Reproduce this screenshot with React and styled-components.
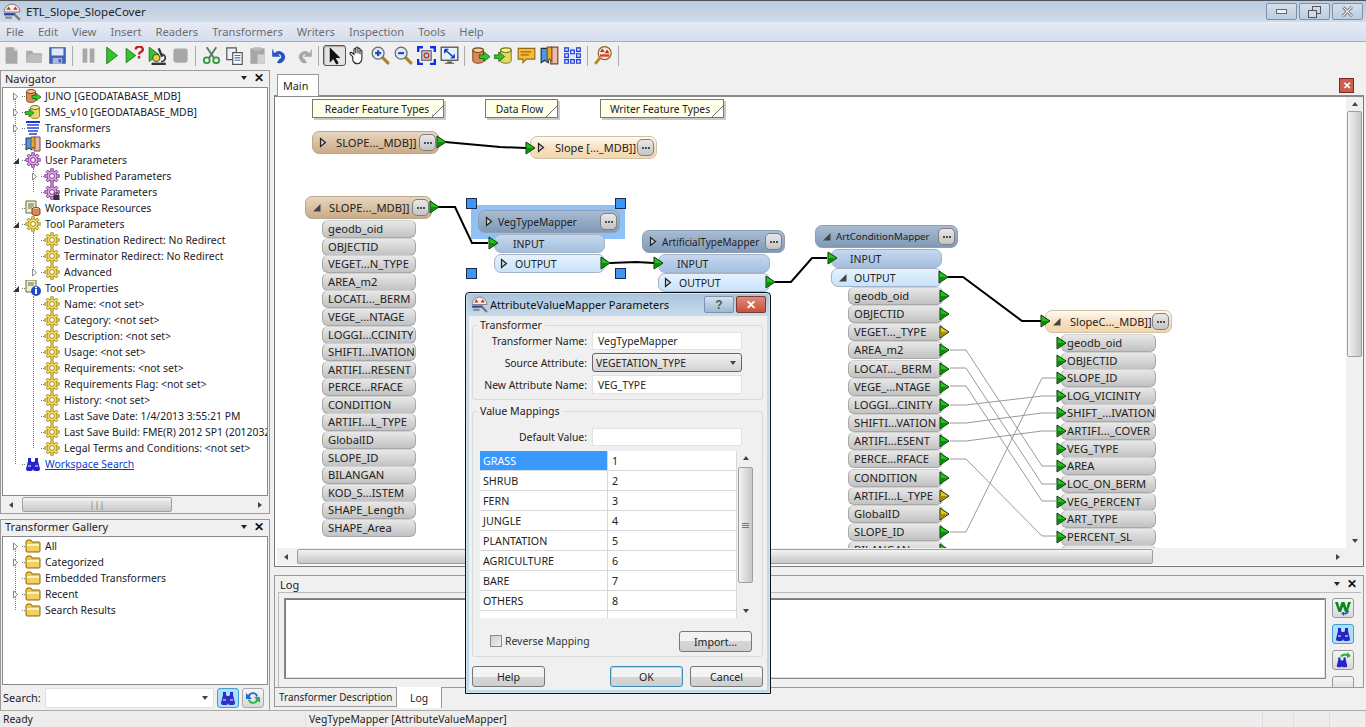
import React from "react";
import styled, { createGlobalStyle, css } from "styled-components";

const FONT = `"Noto Sans", "Liberation Sans", Arial, sans-serif`;
const Global = createGlobalStyle`
  html, body { margin: 0; padding: 0; width: 1366px; height: 727px; overflow: hidden; background: #f0f0f0; }
  body { font-family: ${FONT}; font-size: 10.4px; color: #101020; }
  * { box-sizing: border-box; }
`;

const Page = styled.div`display:flex;flex-direction:column;width:1366px;height:727px;background:#f0f0f0;position:relative;overflow:hidden;`;
const TitleBar = styled.div`
  height:22px;flex:none;display:flex;align-items:center;padding:0 3px 0 3px;gap:5px;
  border-top:1px solid #50545a;
  background:linear-gradient(#b9cbdf,#cfdbe9);font-size:11.5px;color:#222;
`;
const TitleText = styled.span`flex:1;`;
const WinBtns = styled.div`display:flex;gap:2px;margin-top:0;`;
const WinBtn = styled.div`
  width:31px;height:17px;border:1px solid #7f8fa7;border-radius:2px;display:flex;align-items:center;justify-content:center;
  background:linear-gradient(#d3dfec,#bccde0);
`;
const MenuBar = styled.div`
  height:20px;flex:none;display:flex;align-items:center;padding:0 0 0 6px;gap:14px;
  background:linear-gradient(#e6eaf4,#d5deee);font-size:11.2px;color:#6d6d6d;border-bottom:1px solid #a8aeb8;
`;
const ToolBar = styled.div`height:27px;flex:none;display:flex;align-items:center;background:#f0f0f0;`;
const Tool = styled.div`
  width:23px;height:21px;flex:none;display:flex;align-items:center;justify-content:center;
  svg{width:19px;height:19px;}
  ${p=>p.$on&&css`border:1px solid #555;border-radius:3px;background:#e4e4e4;box-shadow:inset 1px 1px 1px #aaa;`}
`;
const ToolSep = styled.div`width:1px;height:20px;background:#aaa;margin:0 4px 0 3px;flex:none;`;
const Body = styled.div`flex:1;display:flex;min-height:0;padding:1px 2px 0 0;`;
const LeftCol = styled.div`width:270px;flex:none;display:flex;flex-direction:column;gap:5px;`;
const RightCol = styled.div`flex:1;min-width:0;display:flex;flex-direction:column;padding:3px 0 0 4px;`;
const Dock = styled.div`
  flex:${p=>p.$flex||"none"};height:${p=>p.$h||"auto"};display:flex;flex-direction:column;min-height:0;
  border:1px solid #9a9a9a;border-bottom-width:${p=>p.$nob?0:1}px;padding:0 1px 0 1px;background:#f0f0f0;
`;
const DockHead = styled.div`
  height:16px;flex:none;display:flex;align-items:center;padding:0 4px ${p=>p.$pb||0}px 3px;font-size:11px;color:#222;
`;
const DockTitle = styled.span`flex:1;`;
const DockMenu = styled.span`width:0;height:0;border:3px solid transparent;border-top:4px solid #222;border-bottom:0;margin-right:7px;`;
const DockClose = styled.span`font:bold 12px "Liberation Sans",sans-serif;color:#111;line-height:12px;`;
const TreeBox = styled.div`
  flex:1;min-height:0;background:#fff;border:1px solid #8a8a8a;overflow:hidden;position:relative;padding-top:${p=>p.$pt||0}px;
`;
const TreeRow = styled.div`
  height:16px;display:flex;align-items:center;white-space:nowrap;padding-left:${p=>p.$lvl?27:8}px;position:relative;
`;
const Expander = styled.span`
  width:9px;height:9px;flex:none;margin-right:2px;display:flex;align-items:center;justify-content:center;
`;
const Dots = styled.span`width:3px;border-top:1px dotted #777;flex:none;`;
const TreeIcon = styled.span`width:16px;height:16px;flex:none;display:flex;align-items:center;justify-content:center;margin-right:4px;`;
const TreeLabel = styled.span`color:#1a1a2a;`;
const LinkLabel = styled.span`color:#0a3ccc;text-decoration:underline;`;
const VDots = styled.div`
  position:absolute;left:${p=>p.$x}px;top:${p=>p.$top}px;height:${p=>p.$h}px;border-left:1px dotted #777;
`;

/* scrollbars */
const HBar = styled.div`
  height:${p=>p.$h||17}px;flex:none;background:#f0f0f0;display:flex;align-items:center;position:relative;
`;
const Arrow = styled.span`
  width:17px;flex:none;display:flex;align-items:center;justify-content:center;
`;
const Thumb = styled.div`
  height:15px;border:1px solid #9f9f9f;border-radius:2px;background:linear-gradient(#f4f4f4 0%,#dcdcdc 50%,#c8c8c8 100%);
  flex:none;width:${p=>p.$w}px;margin-left:${p=>p.$ml||0}px;position:relative;display:flex;align-items:center;justify-content:center;
  color:#777;font-size:9px;line-height:9px;letter-spacing:0;
`;
const VThumb = styled.div`
  width:15px;margin:${p=>p.$mt||0}px 1px 0;height:${p=>p.$h}px;border:1px solid #9f9f9f;border-radius:2px;flex:none;
  background:linear-gradient(90deg,#f4f4f4 0%,#dcdcdc 50%,#c8c8c8 100%);display:flex;align-items:center;justify-content:center;
`;
const Grip = styled.div`width:7px;height:5px;border-top:1px solid #777;border-bottom:1px solid #777;position:relative;
  &::after{content:"";position:absolute;left:0;right:0;top:1px;border-top:1px solid #777;}`;
const VBar = styled.div`width:17px;flex:none;display:flex;flex-direction:column;background:#f0f0f0;`;
const VArrow = styled.div`height:14px;flex:none;display:flex;align-items:center;justify-content:center;`;
const VFill = styled.div`flex:1;`;
const Tri = styled.span`
  width:0;height:0;border:3px solid transparent;
  ${p=>p.$d==="l"&&css`border-right:4px solid #444;border-left:0;`}
  ${p=>p.$d==="r"&&css`border-left:4px solid #444;border-right:0;`}
  ${p=>p.$d==="u"&&css`border-bottom:4px solid #444;border-top:0;`}
  ${p=>p.$d==="d"&&css`border-top:4px solid #444;border-bottom:0;`}
`;

const SearchRow = styled.div`height:25px;flex:none;display:flex;align-items:center;gap:3px;padding:0 2px 0 1px;`;
const SearchLabel = styled.span`width:39px;font-size:11px;color:#222;`;
const SearchBox = styled.div`
  width:169px;height:20px;background:#fff;border:1px solid #e0e0e0;border-radius:2px;display:flex;align-items:center;justify-content:flex-end;padding-right:5px;
`;
const SmallBtn = styled.div`
  width:22px;height:20px;flex:none;border:1px solid ${p=>p.$on?"#3da0d8":"#aaa"};border-radius:3px;
  background:${p=>p.$on?"#aee0f8":"linear-gradient(#f5f5f5,#d8d8d8)"};display:flex;align-items:center;justify-content:center;
`;

/* main */
const MainTabs = styled.div`height:22px;flex:none;display:flex;align-items:flex-end;margin-left:0;`;
const MainTab = styled.div`
  height:22px;width:42px;margin-left:3px;border:1px solid #999;border-bottom:0;background:#fff;display:flex;align-items:center;padding-left:5px;font-size:10.8px;color:#222;margin-bottom:-1px;z-index:1;position:relative;
`;
const MainFrame = styled.div`
  height:472px;flex:none;border:1px solid #777;border-top:2px solid #8a8a8a;background:#fff;display:flex;flex-direction:column;position:relative;padding:0 0 1px 2px;
`;
const CloseTab = styled.div`
  position:absolute;right:9px;top:-19px;width:15px;height:15px;background:#c9604e;border:1px solid #7a2a20;display:flex;align-items:center;justify-content:center;
  color:#fff;font:bold 10px "Liberation Sans",sans-serif;
`;
const MainRow = styled.div`flex:1;min-height:0;display:flex;`;
const Canvas = styled.div`flex:1;min-width:0;position:relative;overflow:hidden;background:#fff;`;
const Wires = styled.svg`position:absolute;left:0;top:0;`;

const Note = styled.div`
  position:absolute;left:${p=>p.$x}px;top:${p=>p.$y}px;width:${p=>p.$w}px;height:19px;
  background:#ffffea;border:1px solid #777;box-shadow:2px 2px 0 #c9c9c9;font-size:10.3px;color:#222;text-align:center;line-height:18px;padding-right:${p=>p.$pr||4}px;
`;
const Fold = styled.svg`position:absolute;right:0;bottom:0;`;

const nodeBg = {
  reader:"linear-gradient(#e8d6bf,#cbab86)",
  writer:"linear-gradient(#fffaf2,#f6dfbe 55%,#f3d8b0)",
  xform:"linear-gradient(#a8bcd3,#7f99b7)",
};
const nodeBd = {reader:"#b9a68f",writer:"#cfc0a6",xform:"#8ea0b6"};
const Node = styled.div`
  position:absolute;left:${p=>p.$x}px;top:${p=>p.$y}px;width:${p=>p.$w}px;height:23px;border-radius:7px;
  background:${p=>nodeBg[p.$k]};border:1px solid ${p=>nodeBd[p.$k]};display:flex;align-items:center;padding-left:6px;font-size:11px;color:#222;
`;
const NodeName = styled.span`flex:1;white-space:nowrap;margin-left:${p=>p.$ml||6}px;font-size:${p=>p.$fs||11}px;`;
const Dots3 = styled.div`
  width:17px;height:17px;border:1px solid #808080;border-radius:5px;background:linear-gradient(#e8e8e8,#c4c4c4);margin-right:2px;flex:none;
  display:flex;align-items:center;justify-content:center;gap:1px;
  i{width:2px;height:2px;background:#222;display:block;border-radius:1px;}
`;
const portBg = {
  input:"linear-gradient(#c5d8ef,#a5bfdd)",
  output:"linear-gradient(#e5f2fe,#c9e2fa)",
};
const Port = styled.div`
  position:absolute;left:${p=>p.$x}px;top:${p=>p.$y}px;width:${p=>p.$w}px;height:${p=>p.$h||19}px;border-radius:7px;
  background:${p=>portBg[p.$k]};border:1px solid #a3b4c8;display:flex;align-items:center;font-size:10.5px;color:#222;padding-left:${p=>p.$pl||18}px;gap:7px;
`;
const Attr = styled.div`
  position:absolute;left:${p=>p.$x}px;top:${p=>p.$y}px;width:${p=>p.$w}px;height:18px;border-radius:6px;
  background:linear-gradient(#e8e8e8,#c2c2c2);border:1px solid #a8a8a8;border-top-color:#d0d0d0;
  font-size:11.2px;color:#222;line-height:15px;padding-left:${p=>p.$pl||5}px;white-space:nowrap;overflow:hidden;
`;
const Arrowhead = styled.svg`position:absolute;left:${p=>p.$x}px;top:${p=>p.$y}px;`;
const Halo = styled.div`position:absolute;left:${p=>p.$x}px;top:${p=>p.$y}px;width:${p=>p.$w}px;height:${p=>p.$h}px;background:#8fc1f7;`;
const Handle = styled.div`position:absolute;left:${p=>p.$x}px;top:${p=>p.$y}px;width:11px;height:11px;background:#3b97f5;border:1px solid #1c2a48;`;

/* log */
const LogPanel = styled.div`
  margin-top:8px;height:112px;flex:none;border:1px solid #9a9a9a;border-bottom:0;padding:0 2px;display:flex;flex-direction:column;
`;
const LogBody = styled.div`flex:1;min-height:0;display:flex;border-top:1px solid #bbb;margin:0 0 0 1px;padding:5px 0 0 5px;gap:6px;overflow:hidden;border-left:1px solid #bbb;`;
const LogBox = styled.div`flex:1;height:81px;background:#fff;border:2px solid #7a7a7a;border-right-color:#ddd;border-bottom-color:#ddd;outline:1px solid #888;outline-offset:-1px;`;
const LogBtns = styled.div`width:22px;display:flex;flex-direction:column;gap:6px;flex:none;margin-right:7px;`;
const LogBtn = styled.div`
  width:22px;height:20px;flex:none;border:1px solid ${p=>p.$on?"#3da0d8":"#999"};border-radius:3px;
  background:${p=>p.$on?"#aee0f8":"linear-gradient(#f5f5f5,#d8d8d8)"};display:flex;align-items:center;justify-content:center;
`;
const BottomTabs = styled.div`height:22px;flex:none;display:flex;align-items:flex-start;border-top:1px solid #9a9a9a;`;
const BTab = styled.div`
  height:${p=>p.$on?21:19}px;padding:0 0 0 4px;display:flex;align-items:center;font-size:${p=>p.$on?10.4:9.9}px;color:#222;white-space:nowrap;
  width:${p=>p.$w}px;
  ${p=>p.$on?css`background:#fff;border-right:1px solid #999;margin-top:-1px;justify-content:center;padding:0;`:css`background:#eee;border:1px solid #999;border-top:0;`}
`;
const Status = styled.div`height:17px;flex:none;display:flex;align-items:center;border-top:1px solid #aaa;background:#efecec;font-size:10.4px;color:#222;margin-top:auto;`;
const StatusCell = styled.div`
  height:100%;display:flex;align-items:center;padding:0 3px;width:${p=>p.$w}px;border-right:1px solid #ddd;flex:${p=>p.$f||"none"};
`;

/* dialog */
const Dialog = styled.div`
  position:absolute;left:465px;top:292px;width:306px;height:402px;border:1px solid #111;border-radius:4px 4px 0 0;
  background:linear-gradient(#a8c4dc,#c8dcec 6%,#bcd7ea);padding:0 3px 3px;display:flex;flex-direction:column;
  box-shadow:0 0 0 1px #cfe3f1 inset;z-index:5;
`;
const DlgTitle = styled.div`height:23px;flex:none;display:flex;align-items:center;padding:0 1px 0 2px;gap:2px;font-size:11.1px;color:#111;`;
const DlgTitleText = styled.span`flex:1;`;
const DlgCaption = styled.div`
  width:${p=>p.$w}px;height:17px;border:1px solid ${p=>p.$red?"#7c3b32":"#7d93ab"};border-radius:2px;display:flex;align-items:center;justify-content:center;
  background:${p=>p.$red?"linear-gradient(#e28a78,#c9503e)":"linear-gradient(#d3e2ef,#9db9d2)"};
  color:${p=>p.$red?"#fff":"#555"};font:bold 12px "Liberation Sans",sans-serif;
`;
const DlgBody = styled.div`flex:1;background:#f0f0f0;display:flex;flex-direction:column;padding:9px 4px 6px 3px;min-height:0;`;
const Group = styled.div`
  border:1px solid #d9d9d9;border-radius:3px;position:relative;margin-bottom:${p=>p.$mb||0}px;height:${p=>p.$h}px;flex:none;padding:${p=>p.$pad||"6px 0 0"};background:#f0f0f0;
`;
const Legend = styled.span`position:absolute;left:4px;top:-7px;background:#f0f0f0;padding:0 3px;font-size:10.6px;color:#222;line-height:13px;`;
const FormRow = styled.div`display:flex;align-items:center;justify-content:flex-end;height:${p=>p.$h||18}px;margin-bottom:3px;padding-right:20px;gap:5px;font-size:10.4px;color:#222;`;
const Input = styled.div`width:150px;height:100%;background:#fff;border:1px solid #e2e2e2;padding-left:5px;display:flex;align-items:center;`;
const Select = styled.div`
  width:150px;height:100%;border:1px solid #666;border-radius:3px;background:linear-gradient(#f2f2f2,#d2d2d2);padding:0 5px 0 3px;display:flex;align-items:center;justify-content:space-between;
`;
const TableWrap = styled.div`display:flex;margin:5px 8px 0 7px;height:167px;`;
const Table = styled.div`flex:1;background:#fff;overflow:hidden;`;
const TRow = styled.div`display:flex;height:20px;border-bottom:1px solid #d8d8d8;font-size:10.7px;color:#222;`;
const TCell = styled.div`
  width:${p=>p.$w||128}px;flex:${p=>p.$f||"none"};display:flex;align-items:center;padding-left:${p=>p.$pl||3}px;border-right:1px solid #d8d8d8;
  ${p=>p.$sel&&css`background:#3a99ff;color:#fff;`}
`;
const DlgFoot = styled.div`display:flex;align-items:center;padding:13px 10px 0 17px;justify-content:space-between;`;
const CheckLabel = styled.label`display:flex;align-items:center;gap:3px;font-size:10.4px;color:#333;margin-top:-2px;`;
const CheckBox = styled.span`width:12px;height:12px;border:1px solid #8a8a8a;background:linear-gradient(135deg,#ccc,#f2f2f2);display:block;`;
const Btn = styled.div`
  width:73px;height:21px;border:1px solid ${p=>p.$def?"#3f8cb4":"#777"};border-radius:3px;display:flex;align-items:center;justify-content:center;font-size:10.6px;color:#222;
  background:linear-gradient(#f3f3f3 50%,#d6d6d6 50%,#cfcfcf);
  ${p=>p.$def&&css`box-shadow:inset 0 0 0 1px #a6dcf3;`}
`;
const BtnRow = styled.div`display:flex;padding:9px 0 0;gap:7px;`;
const Spacer = styled.div`flex:1;`;

/* ---------- icons ---------- */
const S = ({s=16,children,...r})=><svg width={s} height={s} viewBox="0 0 16 16" {...r}>{children}</svg>;

const IcNew = ()=><S><path d="M3 1h7l3 3v11H3z" fill="#a8a8a8"/><path d="M10 1l3 3h-3z" fill="#d8d8d8"/></S>;
const IcOpen = ()=><S><path d="M1 4h5l1 2h7v8H1z" fill="#a9a9a9"/><path d="M3 7h12l-2 7H1z" fill="#bdbdbd"/></S>;
const IcSave = ()=><S><path d="M1 1h14v14H1z" fill="#3f63b8"/><path d="M3 2h10v6H3z" fill="#dfe7f8"/><path d="M4 10h8v5H4z" fill="#a9b9de"/><path d="M9 11h2v3H9z" fill="#3f63b8"/></S>;
const IcPause = ()=><S><path d="M3 2h4v12H3zM9 2h4v12H9z" fill="#a8a8a8"/></S>;
const IcPlay = ()=><S><path d="M4 1l9 7-9 7z" fill="#35c42c" stroke="#1d7a18" strokeWidth=".8"/></S>;
const IcPlayQ = ()=><S><path d="M1 2l8 6-8 6z" fill="#35c42c" stroke="#1d7a18" strokeWidth=".8"/><path d="M9 3a3 2.4 0 1 1 4 2.2c-1 .6-1.2 1-1.2 2" fill="none" stroke="#d01818" strokeWidth="2"/><path d="M10.8 8.5h2v2h-2z" fill="#d01818"/></S>;
const IcInspect = ()=><S><path d="M1 1l8 6-8 6z" fill="#35c42c" stroke="#1d7a18" strokeWidth=".8"/><path d="M9 2l3 7" stroke="#333" strokeWidth="2"/><path d="M3 14h12v2H3z" fill="#333"/><circle cx="7" cy="10" r="3" fill="#e8d23a" stroke="#555"/><path d="M11 13a3 3 0 0 0 1-6" fill="none" stroke="#333" strokeWidth="1.4"/></S>;
const IcStop = ()=><S><rect x="2" y="2" width="12" height="12" rx="2" fill="#a8a8a8"/></S>;
const IcCut = ()=><S><path d="M4 1l6 9M12 1l-6 9" stroke="#5a7a6a" strokeWidth="1.6"/><circle cx="4" cy="12" r="2.5" fill="none" stroke="#2d9a3a" strokeWidth="1.5"/><circle cx="12" cy="12" r="2.5" fill="none" stroke="#2d9a3a" strokeWidth="1.5"/></S>;
const IcCopy = ()=><S><path d="M1.500 1.500h8v10h-8z" fill="#eef" stroke="#555"/><path d="M6.500 5.500h8v10h-8z" fill="#fff" stroke="#555"/><path d="M8 8h5M8 10h5M8 12h5" stroke="#4a6ab0"/></S>;
const IcPaste = ()=><S><path d="M2 2h12v13H2z" fill="#a6a6a6"/><path d="M5 1h6v3H5z" fill="#bcbcbc"/><path d="M8 7h6v8H8z" fill="#d2d2d2"/></S>;
const IcUndo = ()=><S><path d="M3 6a5 5 0 1 1 2 8l2-3a2 2 0 1 0-1-4L8 9H1V2z" fill="#2754c2"/></S>;
const IcRedo = ()=><S><path d="M13 6a5 5 0 1 0-2 8l-2-3a2 2 0 1 1 1-4L8 9h7V2z" fill="#a8a8a8"/></S>;
const IcArrow = ()=><S><path d="M4 1v13l3-3 2.500 4.500 2-1L9 10h4z" fill="#111"/></S>;
const IcHand = ()=><S><path d="M4 9L2 7c-1-1 0-2 1-1.500L5 7V3c0-1.200 1.600-1.200 1.600 0v3V1.800c0-1.200 1.800-1.200 1.800 0V6V2.600c0-1.200 1.700-1.200 1.700 0V7V4.200c0-1.200 1.600-1.200 1.600 0V10c0 3-1.500 5-4 5-2 0-3-1.500-3.700-3z" fill="#fff" stroke="#222" strokeWidth=".9"/></S>;
const IcZoom = ({minus})=><S><path d="M9 9l6 6" stroke="#a8842a" strokeWidth="2.600"/><circle cx="6" cy="6" r="5" fill="#dfe9f8" stroke="#666"/><path d={minus?"M3.500 6h5":"M3.500 6h5M6 3.500v5"} stroke="#2448b0" strokeWidth="1.800"/></S>;
const IcFit = ()=><S><path d="M1 5V1h4M11 1h4v4M15 11v4h-4M5 15H1v-4" fill="none" stroke="#1030e0" strokeWidth="2"/><rect x="4" y="4" width="8" height="8" fill="#c8c8d8" stroke="#667"/><circle cx="8" cy="8" r="2" fill="none" stroke="#c03030"/></S>;
const IcDisplay = ()=><S><rect x="1" y="1" width="14" height="11" fill="#e8f0fa" stroke="#444"/><path d="M4 3h3M4 3v3M12 10H9M12 10V7M4 3l8 7" stroke="#1040d0" strokeWidth="1.200" fill="none"/><path d="M6 13h4v1h2v1H4v-1h2z" fill="#555"/></S>;
const IcDbOut = ({s=16})=><S s={s}><ellipse cx="6" cy="3.500" rx="4.500" ry="2" fill="#f4c8a0" stroke="#7a4418"/><path d="M1.500 3.500v9c0 1.100 2 2 4.500 2s4.500-.9 4.500-2v-9c0 1.100-2 2-4.500 2s-4.500-.9-4.500-2z" fill="#d88a58" stroke="#7a4418" strokeWidth=".8"/><path d="M7 7.500h4V5l5 4-5 4v-2.500H7z" fill="#34c428" stroke="#176a12" strokeWidth=".7"/></S>;
const IcDbIn = ({s=16})=><S s={s}><ellipse cx="10" cy="3.500" rx="4.500" ry="2" fill="#f5f0a0" stroke="#7a7418"/><path d="M5.500 3.500v9c0 1.100 2 2 4.500 2s4.500-.9 4.500-2v-9c0 1.100-2 2-4.500 2s-4.500-.9-4.500-2z" fill="#e4d860" stroke="#7a7418" strokeWidth=".8"/><path d="M0 7.500h4V5l5 4-5 4v-2.500H0z" fill="#34c428" stroke="#176a12" strokeWidth=".7"/></S>;
const IcStack = ()=><S><path d="M1 1h14v2H1z" fill="#2a30c8"/><path d="M2 4h12v2H2zM2 7h12v2H2zM3 10h10v2H3zM4 13h8v2H4z" fill="#5870e8"/></S>;
const IcBook = ({s=16})=><S s={s}><path d="M1 2h6v12l-3-2-3 2z" fill="#4a9ae8" stroke="#234"/><path d="M9 1h6v14H9z" fill="#f0b8a8" stroke="#744"/><path d="M6 1h4v12l-2-2-2 2z" fill="#e6a820" stroke="#754"/></S>;
const Gear = ({c="#f4e070",d="#a08a18",lock})=><S>
  <g fill={c} stroke={d} strokeWidth=".9">
    <circle cx="8" cy="8" r="5.200"/>
    {[0,45,90,135,180,225,270,315].map(a=><rect key={a} x="6.800" y="0.800" width="2.400" height="3" transform={`rotate(${a} 8 8)`}/>)}
  </g>
  <circle cx="8" cy="8" r="4.400" fill={c}/>
  <circle cx="8" cy="8" r="2.400" fill="#fff" stroke={d}/>
  {lock&&<><path d="M9.500 11h6v5h-6z" fill="#333"/><path d="M10.800 11V9.500a2 2 0 0 1 3.500 0V11" fill="none" stroke="#333"/></>}
</S>;
const Purple = p=><Gear c="#e0b8e8" d="#7a2a90" {...p}/>;
const IcRes = ()=><S><path d="M1 1h10v12H1z" fill="#f4efc8" stroke="#6a6a30"/><path d="M3 4h6M3 6h6M3 8h4" stroke="#666"/><ellipse cx="11" cy="9" rx="4" ry="1.500" fill="#f4c8a0" stroke="#7a4418"/><path d="M7 9v5c0 .8 1.800 1.500 4 1.500s4-.7 4-1.500V9" fill="#d88a58" stroke="#7a4418"/></S>;
const IcProps = ()=><S><path d="M1 0h10v12H1z" fill="#f4efc8" stroke="#6a6a30"/><path d="M3 3h6M3 5h6" stroke="#666"/><circle cx="11" cy="11" r="5" fill="#1e4ac8"/><path d="M10 9h2v5h-2zM10 6.800h2v1.400h-2z" fill="#fff"/></S>;
const IcBino = ({s=16,c="#2424c8"})=><S s={s}><path d="M3 2h3v3l1 1h2l1-1V2h3v3l2 8a2 2 0 0 1-2 2h-3a2 2 0 0 1-2-2v-3H8v3a2 2 0 0 1-2 2H3a2 2 0 0 1-2-2l2-8z" fill={c}/><path d="M3 10h3M10 10h3" stroke="#fff" strokeWidth="1.200"/></S>;
const IcFolder = ()=><S><path d="M1 4l1-2h4l1 2h7a1 1 0 0 1 1 1v8a1 1 0 0 1-1 1H2a1 1 0 0 1-1-1z" fill="#f4c83c" stroke="#8a6a14"/><path d="M2 6h12v2H2z" fill="#fff3bc"/><path d="M2 8h12v5H2z" fill="#f2d060"/></S>;
const IcFmeLogo = ({s=16})=><S s={s}><path d="M1 8a7 7 0 0 1 14 0z" fill="#f4f0e8" stroke="#666" strokeWidth=".7"/><path d="M3 6l2-3 2 3zM9 6l2-3 2 3z" fill="#cc2a20"/><path d="M1 9h10v2H1z" fill="#2c3aa8"/><path d="M2 12h6v2H2z" fill="#8a8a8a"/><path d="M10 10l5 5" stroke="#777" strokeWidth="2"/></S>;
const IcRun = ()=><S><circle cx="9" cy="6" r="5.500" fill="#f3ead8" stroke="#8a6a24"/><path d="M5 5l2-3 2 3zM9 6l2-3 2 3z" fill="#cc2a20"/><path d="M5 7h8v2H5z" fill="#d84030"/><path d="M5 10L1 15" stroke="#b08a24" strokeWidth="2.400"/></S>;
const IcNoteY = ()=><S><path d="M1 2h14v9H8l-3 3v-3H1z" fill="#f4ba38" stroke="#9a6a10"/><path d="M3 5h9M3 7.500h7" stroke="#a06a10"/></S>;
const IcGrid = ()=><S><path d="M1 1h14v14H1z" fill="#dfe6fb"/><g fill="#1838d8"><path d="M1 1h4v4H1zM6 3h4v4H6zM11 1h4v4h-4zM1 6h4v4H1zM11 6h4v4h-4zM1 11h4v4H1zM6 11h4v4H6zM11 11h4v4h-4z"/></g><g fill="#dfe6fb"><path d="M2 2h2v2H2zM12 2h2v2h-2zM2 7h2v2H2zM12 7h2v2h-2zM2 12h2v2H2zM7 12h2v2H7zM12 12h2v2h-2zM7 4h2v2H7z"/></g></S>;
const IcRefresh = ()=><S><path d="M13 6A5.500 5.500 0 0 0 3 5L1 3v6h6L5 7a3 3 0 0 1 6 0z" fill="#1e6cd8"/><path d="M3 10a5.500 5.500 0 0 0 10 1l2 2V7H9l2 2a3 3 0 0 1-6 0z" fill="#2db04a"/></S>;
const IcW = ()=><S><path d="M0 2h3l1.500 6L6.500 2h3l2 6L13 2h3l-3.500 10h-2.500l-2-5.500L6 12H3.500z" fill="#0c8a20"/><path d="M7 13a4 4 0 0 0 7-2l-1-1-1 2-3 1v-1l-3 1 3 3v-2z" fill="#2448d0"/></S>;
const IcBinoGreen = ()=><S><path d="M5 4a6 6 0 0 1 7-2V0l4 4-4 2V4a4 4 0 0 0-5 1z" fill="#24b03c"/><g transform="translate(1 4) scale(.75)"><path d="M3 2h3v3l1 1h2l1-1V2h3v3l2 8a2 2 0 0 1-2 2h-3a2 2 0 0 1-2-2v-3H8v3a2 2 0 0 1-2 2H3a2 2 0 0 1-2-2l2-8z" fill="#2424c8"/></g></S>;

const D3 = ()=><Dots3><i/><i/><i/></Dots3>;
const Exp = ({open})=>open
  ? <svg width="9" height="9" style={{flex:"none"}}><path d="M8.500 1v7.500H1z" fill="#444"/></svg>
  : <svg width="8" height="11" style={{flex:"none"}}><path d="M1.500 1.500l5 4-5 4z" fill="#cfd3d8" stroke="#222" strokeWidth="1.200"/></svg>;
const TriOpen = ()=><svg width="9" height="9"><path d="M8 2v6H2z" fill="#333"/></svg>;
const TriClosed = ()=><svg width="9" height="9"><path d="M2.500 1l4 3.500-4 3.500z" fill="#fff" stroke="#888"/></svg>;

/* ---------- data ---------- */
const menus=["File","Edit","View","Insert","Readers","Transformers","Writers","Inspection","Tools","Help"];
const tree=[
  {t:"JUNO [GEODATABASE_MDB]",i:<IcDbOut/>,x:"c"},
  {t:"SMS_v10 [GEODATABASE_MDB]",i:<IcDbIn/>,x:"c"},
  {t:"Transformers",i:<IcStack/>,x:"c"},
  {t:"Bookmarks",i:<IcBook/>},
  {t:"User Parameters",i:<Purple/>,x:"o"},
  {t:"Published Parameters",i:<Purple/>,x:"c",l:1},
  {t:"Private Parameters",i:<Purple lock/>,l:1},
  {t:"Workspace Resources",i:<IcRes/>},
  {t:"Tool Parameters",i:<Gear/>,x:"o"},
  {t:"Destination Redirect: No Redirect",i:<Gear/>,l:1},
  {t:"Terminator Redirect: No Redirect",i:<Gear/>,l:1},
  {t:"Advanced",i:<Gear/>,x:"c",l:1},
  {t:"Tool Properties",i:<IcProps/>,x:"o"},
  ...["Name: <not set>","Category: <not set>","Description: <not set>","Usage: <not set>","Requirements: <not set>","Requirements Flag: <not set>","History: <not set>","Last Save Date: 1/4/2013 3:55:21 PM","Last Save Build: FME(R) 2012 SP1 (20120328)","Legal Terms and Conditions: <not set>"].map(t=>({t,i:<Gear/>,l:1})),
  {t:"Workspace Search",i:<IcBino/>,link:1},
];
const gallery=[["All","c"],["Categorized","c"],["Embedded Transformers"],["Recent","c"],["Search Results"]];

const CX=277, CY=97;
const srcAttrs=["geodb_oid","OBJECTID","VEGET...N_TYPE","AREA_m2","LOCATI..._BERM","VEGE_...NTAGE","LOGGI...CCINITY","SHIFTI...IVATION","ARTIFI...RESENT","PERCE...RFACE","CONDITION","ARTIFI...L_TYPE","GlobalID","SLOPE_ID","BILANGAN","KOD_S...ISTEM","SHAPE_Length","SHAPE_Area"];
const artAttrs=[["geodb_oid"],["OBJECTID"],["VEGET..._TYPE",1],["AREA_m2"],["LOCAT..._BERM"],["VEGE_...NTAGE"],["LOGGI...CINITY"],["SHIFTI...VATION"],["ARTIFI...ESENT"],["PERCE...RFACE"],["CONDITION"],["ARTIFI...L_TYPE",1],["GlobalID",1],["SLOPE_ID"],["BILANGAN"]];
const dstAttrs=["geodb_oid","OBJECTID","SLOPE_ID","LOG_VICINITY","SHIFT_...IVATION","ARTIFI..._COVER","VEG_TYPE","AREA","LOC_ON_BERM","VEG_PERCENT","ART_TYPE","PERCENT_SL",""];
const artY=i=>287+i*18.15;
const dstY=i=>334+i*17.62;

const PortArrow=({x,y,yellow})=>(
  <Arrowhead $x={x-CX} $y={y-7-CY} width="11" height="14" viewBox="0 0 11 14">
    <path d="M1 1l9 6-9 6z" fill={yellow?"#e8c810":"#1fc41a"} stroke="#10300c" strokeWidth="1"/>
    <path d="M1.500 7h7L1.500 12z" fill={yellow?"#a88a08":"#0a8a0a"}/>
  </Arrowhead>
);
const black=[
  "445,142 500,147 526,148",
  "434,207 455,207 472,243 488,243",
  "610,263 636,262 654,263",
  "775,282 791,282 812,258 827,258",
  "948,277 963,277 1022,321 1041,321",
];
const gray=[
  [350,466],[368,484],[386,501],[405,396],[423,413],[441,431],[459,536],[532,378],
];

const rows=[["GRASS","1"],["SHRUB","2"],["FERN","3"],["JUNGLE","4"],["PLANTATION","5"],["AGRICULTURE","6"],["BARE","7"],["OTHERS","8"],["",""]];

export default function App(){
  return <Page>
    <Global/>
    <TitleBar>
      <IcFmeLogo s={18}/>
      <TitleText>ETL_Slope_SlopeCover</TitleText>
      <WinBtns>
        <WinBtn><svg width="12" height="6"><rect x=".5" y=".5" width="10" height="4" fill="#eef2f6" stroke="#666"/></svg></WinBtn>
        <WinBtn><svg width="13" height="12"><rect x="4.500" y=".5" width="8" height="7" fill="none" stroke="#555"/><rect x=".5" y="4.500" width="8" height="7" fill="#cfdbe9" stroke="#555"/></svg></WinBtn>
        <WinBtn><svg width="13" height="11"><path d="M2 1l9 9M11 1l-9 9" stroke="#555" strokeWidth="2.600"/><path d="M2 1l9 9M11 1l-9 9" stroke="#f2f2f2" strokeWidth="1.200"/></svg></WinBtn>
      </WinBtns>
    </TitleBar>
    <MenuBar>{menus.map(m=><span key={m}>{m}</span>)}</MenuBar>
    <ToolBar>
      <Tool><IcNew/></Tool><Tool><IcOpen/></Tool><Tool><IcSave/></Tool><ToolSep/>
      <Tool><IcPause/></Tool><Tool><IcPlay/></Tool><Tool><IcPlayQ/></Tool><Tool><IcInspect/></Tool><Tool><IcStop/></Tool><ToolSep/>
      <Tool><IcCut/></Tool><Tool><IcCopy/></Tool><Tool><IcPaste/></Tool><Tool><IcUndo/></Tool><Tool><IcRedo/></Tool><ToolSep/>
      <Tool $on><IcArrow/></Tool><Tool><IcHand/></Tool><Tool><IcZoom/></Tool><Tool><IcZoom minus/></Tool><Tool><IcFit/></Tool><Tool><IcDisplay/></Tool><ToolSep/>
      <Tool><IcDbOut/></Tool><Tool><IcDbIn/></Tool><Tool><IcNoteY/></Tool><Tool><IcBook/></Tool><Tool><IcGrid/></Tool><ToolSep/>
      <Tool><IcRun/></Tool><ToolSep/>
    </ToolBar>
    <Body>
      <LeftCol>
        <Dock $h="444px">
          <DockHead $pb={2}><DockTitle>Navigator</DockTitle><DockMenu/><DockClose>✕</DockClose></DockHead>
          <TreeBox>
            <VDots $x={12} $top={8} $h={368}/>
            <VDots $x={30} $top={80} $h={24}/>
            <VDots $x={30} $top={144} $h={40}/>
            <VDots $x={30} $top={208} $h={152}/>
            {tree.map((r,i)=>(
              <TreeRow key={i} $lvl={r.l}>
                <Expander>{r.x==="c"?<TriClosed/>:r.x==="o"?<TriOpen/>:null}</Expander>
                <Dots/>
                <TreeIcon>{r.i}</TreeIcon>
                {r.link?<LinkLabel>{r.t}</LinkLabel>:<TreeLabel>{r.t}</TreeLabel>}
              </TreeRow>
            ))}
          </TreeBox>
          <HBar>
            <Arrow><Tri $d="l"/></Arrow>
            <Thumb $w={150} $ml={3}><span>|||</span></Thumb>
            <Spacer/>
            <Arrow><Tri $d="r"/></Arrow>
          </HBar>
        </Dock>
        <Dock $flex="1" $nob>
          <DockHead $pb={3}><DockTitle>Transformer Gallery</DockTitle><DockMenu/><DockClose>✕</DockClose></DockHead>
          <TreeBox $pt={1}>
            <VDots $x={12} $top={9} $h={64}/>
            {gallery.map(([t,x])=>(
              <TreeRow key={t}>
                <Expander>{x?<TriClosed/>:null}</Expander>
                <Dots/>
                <TreeIcon><IcFolder/></TreeIcon>
                <TreeLabel>{t}</TreeLabel>
              </TreeRow>
            ))}
          </TreeBox>
          <SearchRow>
            <SearchLabel>Search:</SearchLabel>
            <SearchBox><Tri $d="d"/></SearchBox>
            <SmallBtn $on><IcBino c="#2a30c8"/></SmallBtn>
            <SmallBtn><IcRefresh/></SmallBtn>
          </SearchRow>
        </Dock>
      </LeftCol>
      <RightCol>
        <MainTabs><MainTab>Main</MainTab></MainTabs>
        <MainFrame>
          <CloseTab>✕</CloseTab>
          <MainRow>
            <Canvas>
              <Wires width="1070" height="460" viewBox={`${CX} ${CY} 1070 460`}>
                {gray.map(([a,b],i)=><polyline key={i} points={`950,${a} 966,${a} 1042,${b} 1056,${b}`} fill="none" stroke="#9a9a9a" strokeWidth="1"/>)}
                {black.map((p,i)=><polyline key={i} points={p} fill="none" stroke="#000" strokeWidth="2"/>)}
              </Wires>
              <Note $x={312-CX} $y={99-CY} $w={132} $pr={2}>Reader Feature Types<Fold width="11" height="11"><path d="M0 11L11 0v11z" fill="#fff"/><path d="M0 11L11 0M0 11V8" stroke="#666" fill="none"/></Fold></Note>
              <Note $x={485-CX} $y={99-CY} $w={73}>Data Flow<Fold width="11" height="11"><path d="M0 11L11 0v11z" fill="#fff"/><path d="M0 11L11 0" stroke="#666" fill="none"/></Fold></Note>
              <Note $x={600-CX} $y={99-CY} $w={124}>Writer Feature Types<Fold width="11" height="11"><path d="M0 11L11 0v11z" fill="#fff"/><path d="M0 11L11 0" stroke="#666" fill="none"/></Fold></Note>

              <Node $k="reader" $x={312-CX} $y={131-CY} $w={127}><Exp/><NodeName $ml={9} $fs={11.2}>SLOPE..._MDB]]</NodeName><D3/></Node>
              <PortArrow x={436} y={142}/>
              <Node $k="writer" $x={530-CX} $y={136-CY} $w={127}><Exp/><NodeName $ml={10}>Slope [..._MDB]]</NodeName><D3/></Node>
              <PortArrow x={525} y={148}/>

              <Node $k="reader" $x={305-CX} $y={196-CY} $w={127}><Exp open/><NodeName $ml={8} $fs={11.2}>SLOPE..._MDB]]</NodeName><D3/></Node>
              <PortArrow x={429} y={207}/>
              {srcAttrs.map((t,i)=><Attr key={t} $x={322-CX} $y={220+i*17.59-CY} $w={94}>{t}</Attr>)}

              <Halo $x={471-CX} $y={205-CY} $w={154} $h={34}/>
              <Handle $x={466-CX} $y={198-CY}/><Handle $x={615-CX} $y={198-CY}/><Handle $x={466-CX} $y={268-CY}/><Handle $x={615-CX} $y={268-CY}/>
              <Node $k="xform" $x={478-CX} $y={210-CY} $w={142}><Exp/><NodeName $ml={5} $fs={10.3}>VegTypeMapper</NodeName><D3/></Node>
              <Port $k="input" $x={494-CX} $y={234-CY} $w={111}>INPUT</Port>
              <Port $k="output" $x={494-CX} $y={254-CY} $w={111} $pl={5}><Exp/>OUTPUT</Port>
              <PortArrow x={488} y={243}/><PortArrow x={600} y={263}/>

              <Node $k="xform" $x={642-CX} $y={230-CY} $w={143}><Exp/><NodeName $ml={5} $fs={10}>ArtificialTypeMapper</NodeName><D3/></Node>
              <Port $k="input" $x={658-CX} $y={254-CY} $w={112}>INPUT</Port>
              <Port $k="output" $x={658-CX} $y={273-CY} $w={112} $pl={5}><Exp/>OUTPUT</Port>
              <PortArrow x={653} y={263}/><PortArrow x={765} y={282}/>

              <Node $k="xform" $x={815-CX} $y={225-CY} $w={143}><Exp open/><NodeName $ml={5} $fs={9.7}>ArtConditionMapper</NodeName><D3/></Node>
              <Port $k="input" $x={831-CX} $y={249-CY} $w={111}>INPUT</Port>
              <Port $k="output" $x={831-CX} $y={268-CY} $w={111} $pl={6}><Exp open/>OUTPUT</Port>
              <PortArrow x={827} y={258}/><PortArrow x={938} y={277}/>
              {artAttrs.map(([t,y],i)=><React.Fragment key={t}><Attr $x={848-CX} $y={artY(i)-CY} $w={95}>{t}</Attr><PortArrow x={939} y={artY(i)+9} yellow={y}/></React.Fragment>)}

              <Node $k="writer" $x={1045-CX} $y={310-CY} $w={127}><Exp open/><NodeName $ml={9}>SlopeC..._MDB]]</NodeName><D3/></Node>
              <PortArrow x={1040} y={321}/>
              {dstAttrs.map((t,i)=><React.Fragment key={i}><Attr $x={1061-CX} $y={dstY(i)-CY} $w={95} $pl={5}>{t}</Attr>{t&&<PortArrow x={1056} y={dstY(i)+9}/>}</React.Fragment>)}
            </Canvas>
            <VBar>
              <VArrow><Tri $d="u"/></VArrow>
              <VThumb $h={246} $mt={0}/>
              <VFill/>
              <VArrow><Tri $d="d"/></VArrow>
            </VBar>
          </MainRow>
          <HBar>
            <Arrow><Tri $d="l"/></Arrow>
            <Thumb $w={856} $ml={3}/>
            <Spacer/>
            <Arrow><Tri $d="r"/></Arrow>
            <Arrow/>
          </HBar>
        </MainFrame>
        <LogPanel>
          <DockHead><DockTitle>Log</DockTitle><DockMenu/><DockClose>✕</DockClose></DockHead>
          <LogBody>
            <LogBox/>
            <LogBtns>
              <LogBtn><IcW/></LogBtn>
              <LogBtn $on><IcBino/></LogBtn>
              <LogBtn><IcBinoGreen/></LogBtn>
              <LogBtn/>
            </LogBtns>
          </LogBody>
        </LogPanel>
        <BottomTabs>
          <BTab $w={123}>Transformer Description</BTab>
          <BTab $on $w={45}>Log</BTab>
        </BottomTabs>
      </RightCol>
    </Body>
    <Status>
      <StatusCell $w={306}>Ready</StatusCell>
      <StatusCell $f="1">VegTypeMapper [AttributeValueMapper]</StatusCell>
      <StatusCell $w={31}/><StatusCell $w={36}/><StatusCell $w={36}/>
    </Status>
    <Dialog>
      <DlgTitle>
        <IcFmeLogo s={17}/>
        <DlgTitleText>AttributeValueMapper Parameters</DlgTitleText>
        <DlgCaption $w={30}>?</DlgCaption>
        <DlgCaption $w={30} $red>✕</DlgCaption>
      </DlgTitle>
      <DlgBody>
        <Group $h={75} $mb={11}>
          <Legend>Transformer</Legend>
          <FormRow>Transformer Name:<Input>VegTypeMapper</Input></FormRow>
          <FormRow $h={19}>Source Attribute:<Select>VEGETATION_TYPE<Tri $d="d"/></Select></FormRow>
          <FormRow $h={19}>New Attribute Name:<Input>VEG_TYPE</Input></FormRow>
        </Group>
        <Group $h={246} $pad="16px 0 0">
          <Legend>Value Mappings</Legend>
          <FormRow>Default Value:<Input/></FormRow>
          <TableWrap>
            <Table>
              {rows.map(([a,b],i)=><TRow key={i}><TCell $sel={i===0}>{a}</TCell><TCell $f="1" $pl={4}>{b}</TCell></TRow>)}
            </Table>
            <VBar>
              <VArrow><Tri $d="u"/></VArrow>
              <VThumb $h={116} $mt={2}><Grip/></VThumb>
              <VFill/>
              <VArrow><Tri $d="d"/></VArrow>
            </VBar>
          </TableWrap>
          <DlgFoot>
            <CheckLabel><CheckBox/>Reverse Mapping</CheckLabel>
            <Btn>Import...</Btn>
          </DlgFoot>
        </Group>
        <BtnRow>
          <Btn>Help</Btn>
          <Spacer/>
          <Btn $def>OK</Btn>
          <Btn>Cancel</Btn>
        </BtnRow>
      </DlgBody>
    </Dialog>
  </Page>;
}
